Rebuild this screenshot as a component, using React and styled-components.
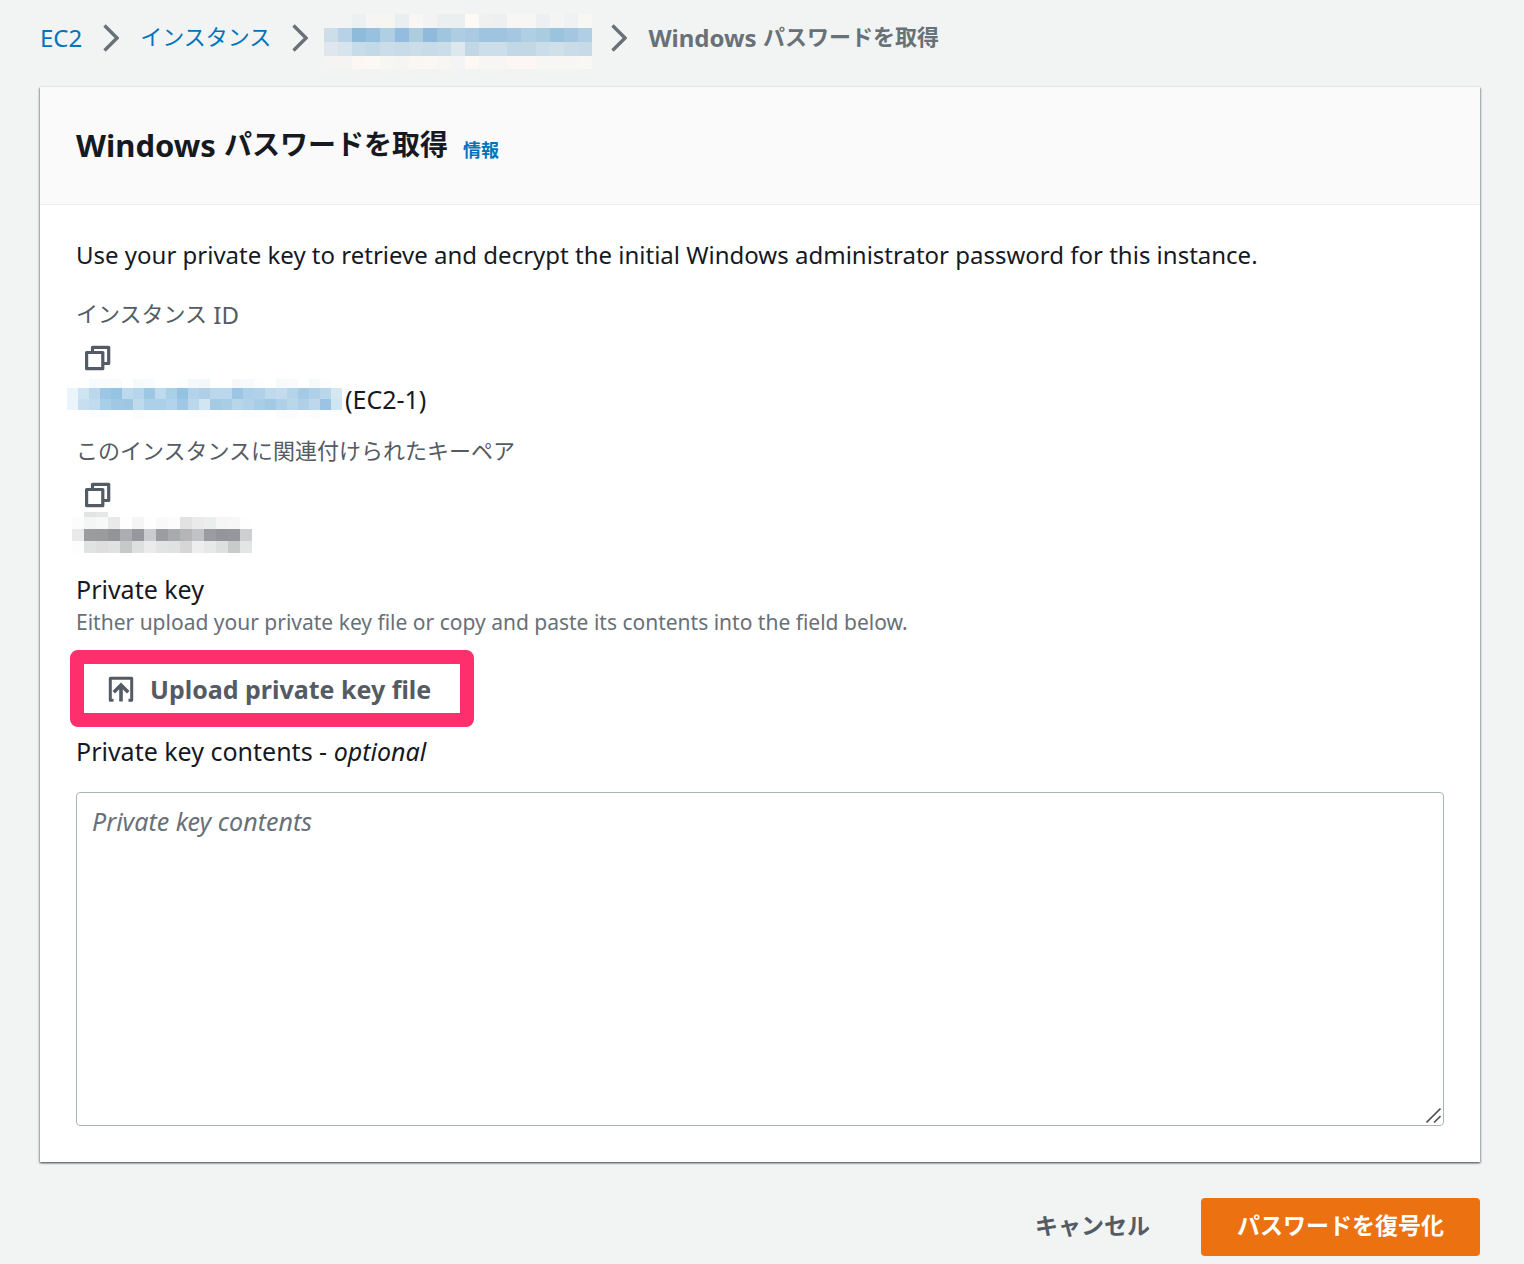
import React from "react";
import styled, { createGlobalStyle } from "styled-components";

const GlobalStyle = createGlobalStyle`
  *, *::before, *::after { box-sizing: border-box; }
  body {
    margin: 0;
    background: #f2f4f3;
    color: #16191f;
    font-family: "Noto Sans", "Noto Sans CJK JP", sans-serif;
    font-size: 24px;
    line-height: 36px;
  }
`;

const Page = styled.div`
  padding: 0 44px 8px 40px;
`;

const Breadcrumbs = styled.nav`
  height: 87px;
  padding-bottom: 11px;
`;

const Crumbs = styled.ol`
  display: flex;
  align-items: center;
  gap: 21px;
  height: 100%;
  margin: 0;
  padding: 0;
  list-style: none;
  white-space: nowrap;
`;

const Crumb = styled.li`
  display: flex;
  align-items: center;
  color: #687078;
  font-weight: ${(p) => (p.$current ? 700 : 400)};
`;

const Link = styled.a`
  color: #0073bb;
  text-decoration: none;
`;

const RedactedCrumb = styled(Link)`
  display: block;
  margin: 0 -2px 0 -5px;
  padding-top: 7px;
`;

const InfoLink = styled(Link)`
  font-size: 18px;
  line-height: 18px;
  font-weight: 700;
`;

const Ja = styled.span`
  font-family: "Noto Sans CJK JP", sans-serif;
  font-size: ${(p) => p.$size || 22}px;
  line-height: 1;
  vertical-align: 2px;
`;

const Panel = styled.main`
  background: #fff;
  box-shadow: 0 1px 2px 0 rgba(0, 28, 36, 0.6), 1px 1px 2px 0 rgba(0, 28, 36, 0.2),
    -1px 1px 2px 0 rgba(0, 28, 36, 0.2);
`;

const PanelHeader = styled.header`
  display: flex;
  align-items: baseline;
  gap: 15px;
  padding: 40px 36px;
  background: #fafafa;
  border-bottom: 1px solid #eaeded;
`;

const Title = styled.h1`
  margin: 0;
  font-size: 31px;
  line-height: 37px;
  font-weight: 700;
`;

const PanelBody = styled.div`
  padding: 32px 36px 36px;
`;

const Intro = styled.p`
  margin: 0 0 24px;
`;

const Details = styled.dl`
  margin: 0;
`;

const Term = styled.dt`
  color: #545b64;
`;

const Detail = styled.dd`
  height: 101px;
  margin: 0;
`;

const DetailValue = styled.div`
  display: flex;
  align-items: center;
  gap: 3px;
  height: 41px;
  margin-left: ${(p) => -p.$bleed}px;
  font-size: 25px;
`;

const CopyButton = styled.button`
  display: flex;
  align-items: center;
  height: 45px;
  padding: 4px 9px 0;
  border: 0;
  background: none;
  color: #545b64;
`;

const FieldLabel = styled.label`
  display: block;
  font-size: 25px;
`;

const Hint = styled.p`
  margin: 0;
  color: #687078;
  font-size: 21px;
  line-height: 30px;
`;

const Highlight = styled.div`
  width: fit-content;
  margin: 13px 0 6px -6px;
  border: 14px solid #ff2f6d;
  border-radius: 8px;
`;

const UploadButton = styled.button`
  display: flex;
  align-items: center;
  gap: 16px;
  height: 49px;
  padding: 0 29px 0 24px;
  border: 0;
  background: #fff;
  color: #545b64;
  font: inherit;
  font-size: 25px;
  font-weight: 700;
`;

const TextBox = styled.div`
  position: relative;
  margin-top: 23px;
`;

const TextArea = styled.textarea`
  display: block;
  width: 100%;
  height: 334px;
  padding: 10px 15px;
  border: 1px solid #aab7b8;
  border-radius: 4px;
  background: #fff;
  color: #16191f;
  font: inherit;
  font-size: 25px;
  resize: none;

  &::placeholder {
    color: #687078;
    font-style: italic;
    opacity: 1;
  }
`;

const Grip = styled.svg`
  position: absolute;
  right: 3px;
  bottom: 3px;
  pointer-events: none;
`;

const Actions = styled.footer`
  display: flex;
  justify-content: flex-end;
  gap: 15px;
  padding-top: 36px;
`;

const ActionButton = styled.button`
  height: 58px;
  padding: 0 36px;
  border: 0;
  border-radius: 4px;
  background: ${(p) => (p.$primary ? "#ec7211" : "transparent")};
  color: ${(p) => (p.$primary ? "#fff" : "#545b64")};
  font: inherit;
  font-weight: 700;
`;

const Pixels = styled.svg`
  display: block;
  flex: none;
`;

const Chevron = () => (
  <svg width="16" height="28" viewBox="0 0 16 28" fill="none" stroke="#687078" strokeWidth="3.4" aria-hidden="true">
    <path d="M1.5 1.5 14 14 1.5 26.5" />
  </svg>
);

const CopyIcon = () => (
  <svg width="26" height="26" viewBox="0 0 26 26" fill="none" stroke="currentColor" strokeWidth="3.2" strokeLinejoin="round" aria-hidden="true">
    <path d="M1.6 7.5h16.2v16.2H1.6zM7.5 7V2.3h16.2v16.2H19" />
  </svg>
);

const UploadIcon = () => (
  <svg width="26" height="26" viewBox="0 0 26 26" fill="none" stroke="currentColor" strokeWidth="3" aria-hidden="true">
    <path d="M5.5 24.2H2.3V2.3h21.4v21.9h-3.2" strokeLinejoin="round" />
    <path d="M5.8 16.2 13 9l7.2 7.2M13 10v15.5" strokeWidth="3.6" />
  </svg>
);

/* Redacted values: rows of [height, colours], each colour one block wide. */
const crumbPixels = [
  [14, "f2f3f3 f2f3f3 ebf0f1 f6f5f4 f5f5f2 e9eef1 f8f7f6 f3f3f3 ebefef ebefef fdf9f4 eff1f0 edeff0 f7f6f4 f7f6f4 edeff2 f3f4f3 eff1f3 f8f7f3"],
  [14, "cddee9 b7d2e6 8fbbdb 98c0df b0cfe3 94bcde acccdf 90badb a0c5df aecde3 a9cae2 9fc4e0 a0c4df a5c7e1 afcfe4 abcce0 9bc3de a4c6e0 b0cfe4"],
  [14, "dfe6ed d8e4ed c7dbe8 c2d9e7 cbdde9 c8dce7 cadde8 c8dce7 cbdde9 dce8ed c1d7e5 ccdeea ccdeea c3d8e6 c2d8e5 cbdde9 cfe0e9 cadce8 c6dae7"],
  [13, "f5f4f2 f5f4f3 fcf7f2 fcf8f4 f6f6f3 f5f6f4 faf7f3 fbf7f4 f8f6f2 f4f4f4 fdf8f4 f7f6f4 f7f6f4 fcf7f4 fcf7f4 f6f6f4 f7f6f4 f7f6f4 f8f7f3"],
];
const instancePixels = [
  [9, "fefefe ffffff f7fbfd f9fcfd f9fcfd ffffff f5fafc f8fbfd ffffff ffffff fbfdfe f5f9fc f2f7fa ffffff ffffff f5f9fc f7fafc fcfdfe ffffff f7fafd f8fbfd ffffff f6fafc fcfdfe ffffff"],
  [11, "ebf4fa cfe4f1 bbd7ec 9dc6e5 95c3e2 bdd9ed b4d5ea 9ec7e3 bddaee aad0e7 93c2e2 b2d3e9 aecfe7 bad7eb bbd7ec 9dc6e4 aecfe8 b0d1e8 c0daed c3dbed b4d4ea a5cae5 afd0e8 bad6eb d5e8f2"],
  [11, "ebf4fa c8def0 c0dbed a9cee8 a0c8e4 a0c7e2 bedbed abd0e7 acd0e8 b2d3eb a1c7e5 bad7ed d1e5f2 a5cbe4 aacde6 b8d6ea b1d2e9 a8cde6 a3c9e4 afd0e9 b8d7eb afd0e8 bdd8ed 9bc4e4 cfe5f1"],
  [8, "ffffff ffffff fbfdfe fbfdfe ffffff ffffff fbfcfe fcfeff fdfeff ffffff ffffff fcfdff fcfdff fefeff ffffff fefefe fcfdfe fcfdfe ffffff fbfcfe fbfcfe fefeff fbfcfe ffffff ffffff"],
];
const keyPixels = [
  [5, "ffffff e1e3e4 e5e7e8 ffffff ffffff ffffff ffffff ffffff ffffff ffffff ffffff ffffff ffffff ffffff ffffff"],
  [12, "fbfcfc f4f5f5 f6f9f8 e9e9e9 fefefe f5f5f5 fefefe f9f9f9 fafdfc e2e2e2 eaeaea eaeeec f6f6f6 f7f7f7 fefefe"],
  [12, "e9e9e9 9b9c9e 9a9b9d 929495 acadb0 97989d cacbcd 9c9da0 a9aaac b5b5b8 c1c2c3 9b9c9f 94959b 96979c cecfd0"],
  [12, "fcfdfd e0e3e2 dddedd e0e1e1 c7c8ca dedfdf ebebeb e1e4e3 e0e1e1 d6d6d7 eeeeee e6e9e8 dedfdf c8cbca e4e5e5"],
  [6, "ffffff ffffff ffffff ffffff ffffff ffffff ffffff ffffff ffffff ffffff ffffff ffffff ffffff ffffff ffffff"],
];

function Redacted({ rows, width }) {
  const height = rows.reduce((sum, [h]) => sum + h, 0);
  const columns = rows[0][1].split(" ").length;
  let top = 0;
  return (
    <Pixels width={width} height={height} viewBox={`0 0 ${columns} ${height}`} preserveAspectRatio="none" shapeRendering="crispEdges" aria-hidden="true">
      {rows.map(([h, colours], r) => {
        const y = top;
        top += h;
        return colours.split(" ").map((c, i) => (
          <rect key={`${r}-${i}`} x={i} y={y} width="1" height={h} fill={`#${c}`} />
        ));
      })}
    </Pixels>
  );
}

export default function App() {
  return (
    <>
      <GlobalStyle />
      <Page>
        <Breadcrumbs aria-label="Breadcrumb">
          <Crumbs>
            <Crumb><Link href="#ec2">EC2</Link></Crumb>
            <Chevron />
            <Crumb><Link href="#instances"><Ja>インスタンス</Ja></Link></Crumb>
            <Chevron />
            <Crumb>
              <RedactedCrumb href="#instance" aria-label="Instance"><Redacted rows={crumbPixels} width={268} /></RedactedCrumb>
            </Crumb>
            <Chevron />
            <Crumb $current aria-current="page"><span>Windows <Ja>パスワードを取得</Ja></span></Crumb>
          </Crumbs>
        </Breadcrumbs>

        <Panel>
          <PanelHeader>
            <Title>Windows <Ja $size={28}>パスワードを取得</Ja></Title>
            <InfoLink href="#info">情報</InfoLink>
          </PanelHeader>
          <PanelBody>
            <Intro>Use your private key to retrieve and decrypt the initial Windows administrator password for this instance.</Intro>
            <Details>
              <Term><Ja>インスタンス</Ja> ID</Term>
              <Detail>
                <CopyButton type="button" aria-label="Copy"><CopyIcon /></CopyButton>
                <DetailValue $bleed={9}><Redacted rows={instancePixels} width={275} />(EC2-1)</DetailValue>
              </Detail>
              <Term><Ja>このインスタンスに関連付けられたキーペア</Ja></Term>
              <Detail>
                <CopyButton type="button" aria-label="Copy"><CopyIcon /></CopyButton>
                <DetailValue $bleed={4}><Redacted rows={keyPixels} width={180} /></DetailValue>
              </Detail>
            </Details>
            <FieldLabel htmlFor="upload">Private key</FieldLabel>
            <Hint>Either upload your private key file or copy and paste its contents into the field below.</Hint>
            <Highlight>
              <UploadButton id="upload" type="button"><UploadIcon />Upload private key file</UploadButton>
            </Highlight>
            <FieldLabel htmlFor="contents">Private key contents - <em>optional</em></FieldLabel>
            <TextBox>
              <TextArea id="contents" placeholder="Private key contents" />
              <Grip width="15" height="15" viewBox="0 0 15 15" stroke="#555" strokeWidth="1.6" aria-hidden="true">
                <path d="M.5 14.5 14.5 .5M8 14.5 14.5 8" />
              </Grip>
            </TextBox>
          </PanelBody>
        </Panel>

        <Actions>
          <ActionButton type="button"><Ja $size={23}>キャンセル</Ja></ActionButton>
          <ActionButton type="button" $primary><Ja $size={23}>パスワードを復号化</Ja></ActionButton>
        </Actions>
      </Page>
    </>
  );
}
